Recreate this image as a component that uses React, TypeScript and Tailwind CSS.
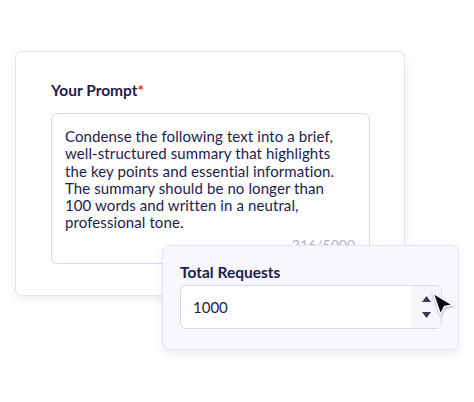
import React from "react";

const font = { fontFamily: "Lato, 'Noto Sans', sans-serif" };

function Cursor() {
  return (
    <svg width="26" height="26" viewBox="0 0 26 26" className="absolute left-[430px] top-[290px] drop-shadow-[0_1px_1px_rgba(0,0,0,0.35)]">
      <path d="M3 3 L23 15 L14.5 16.5 L10.5 24.5 Z" fill="#0b0b12" stroke="#ffffff" strokeWidth="1.5" strokeLinejoin="round" />
    </svg>
  );
}

export default function App() {
  return (
    <div className="relative w-[474px] h-[402px] bg-white overflow-hidden" style={font}>
      <div className="pl-[15px] pt-[51px]">
        <div className="flex flex-col gap-[14px] w-[390px] h-[245px] rounded-[7px] border border-[#e3e3f1] bg-white shadow-[0_3px_8px_rgba(40,40,90,0.08)] pl-[35px] pt-[29px]">
          <div className="text-[15.5px] font-bold text-[#1c1d4c] leading-[18px]">
            Your Prompt<span className="text-[#e0352b]">*</span>
          </div>
          <div className="flex flex-col w-[319px] h-[151px] rounded-[6px] border border-[#d9d9ee] bg-white pl-[13px] pr-[14px] pt-[14px] pb-[10px]">
            <p className="w-[282px] text-[15px] leading-[17.3px] text-[#1c1d4c] tracking-[0.1px]">
              Condense the following text into a brief, well-structured summary that highlights the key points and essential information. The summary should be no longer than 100 words and written in a neutral, professional tone.
            </p>
            <div className="mt-auto self-end text-[14px] leading-[16px] text-[#b3b3c4]">216/5000</div>
          </div>
        </div>
      </div>

      <div className="absolute left-[162px] top-[245px] w-[297px] h-[105px] flex flex-col gap-[4px] rounded-[7px] border border-[#e3e3f1] bg-[#f7f7fc] shadow-[0_4px_10px_rgba(40,40,90,0.08)] pl-[17px] pt-[17px]">
        <div className="text-[15.5px] font-bold text-[#1c1d4c] leading-[18px]">Total Requests</div>
        <div className="flex w-[262px] h-[44px] rounded-[6px] border border-[#d9d9ee] bg-white overflow-hidden">
          <div className="flex-1 flex items-center pl-[12px] text-[15px] text-[#1c1d4c]">1000</div>
          <div className="w-[30px] bg-[#f6f6fa] flex flex-col items-center justify-between py-[10px]">
            <svg width="9" height="6" viewBox="0 0 9 6"><path d="M4.5 0 L9 6 L0 6 Z" fill="#3a3b5c" /></svg>
            <svg width="9" height="6" viewBox="0 0 9 6"><path d="M0 0 L9 0 L4.5 6 Z" fill="#3a3b5c" /></svg>
          </div>
        </div>
      </div>

      <Cursor />
    </div>
  );
}
